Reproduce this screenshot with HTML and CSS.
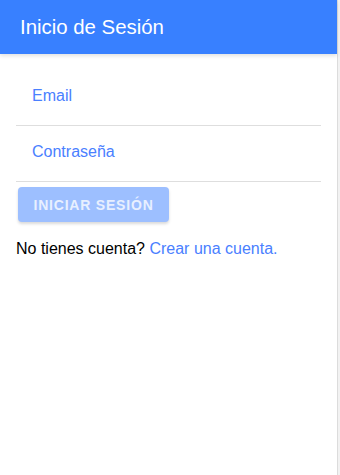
FILE: index.html
```html
<!DOCTYPE html>
<html lang="es">
<head>
<meta charset="utf-8">
<link rel="stylesheet" href="styles.css">
</head>
<body>
<div class="app">
  <header class="toolbar"><h1 class="title">Inicio de Sesión</h1></header>
  <main class="content">
    <div class="list">
      <div class="item"><span class="label">Email</span></div>
      <div class="item"><span class="label">Contraseña</span></div>
    </div>
    <button class="btn" disabled>INICIAR SESIÓN</button>
    <p class="signup">No tienes cuenta? <a class="link" href="#">Crear una cuenta.</a></p>
  </main>
</div>
</body>
</html>
```
FILE: styles.css
```css
html, body { margin: 0; padding: 0; height: 100%; }
body { background: #f2f2f2; font-family: "Liberation Sans", Arial, sans-serif; }
.app { width: 337px; height: 475px; background: #fff; border-right: 1px solid #dcdcdc; box-sizing: content-box; }
.toolbar { height: 54px; background: #3880ff; display: flex; align-items: center; padding-left: 20px; box-shadow: 0 2px 4px rgba(0,0,0,0.12); position: relative; }
.title { margin: 0; color: #fff; font-size: 20.4px; font-weight: normal; }
.content { padding: 16px 16px 0 16px; }
.list { display: flex; flex-direction: column; }
.item { height: 55px; box-sizing: border-box; height: 56px; padding-bottom: 3px; border-bottom: 1px solid #dedede; display: flex; align-items: center; padding-left: 16px; }
.label { color: #4a80ff; font-size: 16px; }
.btn { margin: 5px 0 0 2px; width: 151px; height: 35px; border: none; border-radius: 4px; background: #9dbfff; color: #e8f0ff; font-family: "Liberation Sans", Arial, sans-serif; font-weight: bold; font-size: 14px; letter-spacing: 0.8px; box-shadow: 0 2px 3px rgba(0,0,0,0.15); padding: 0; }
.signup { margin: 18px 0 0 0; font-size: 16px; color: #000; }
.link { color: #4a80ff; text-decoration: none; }
```
